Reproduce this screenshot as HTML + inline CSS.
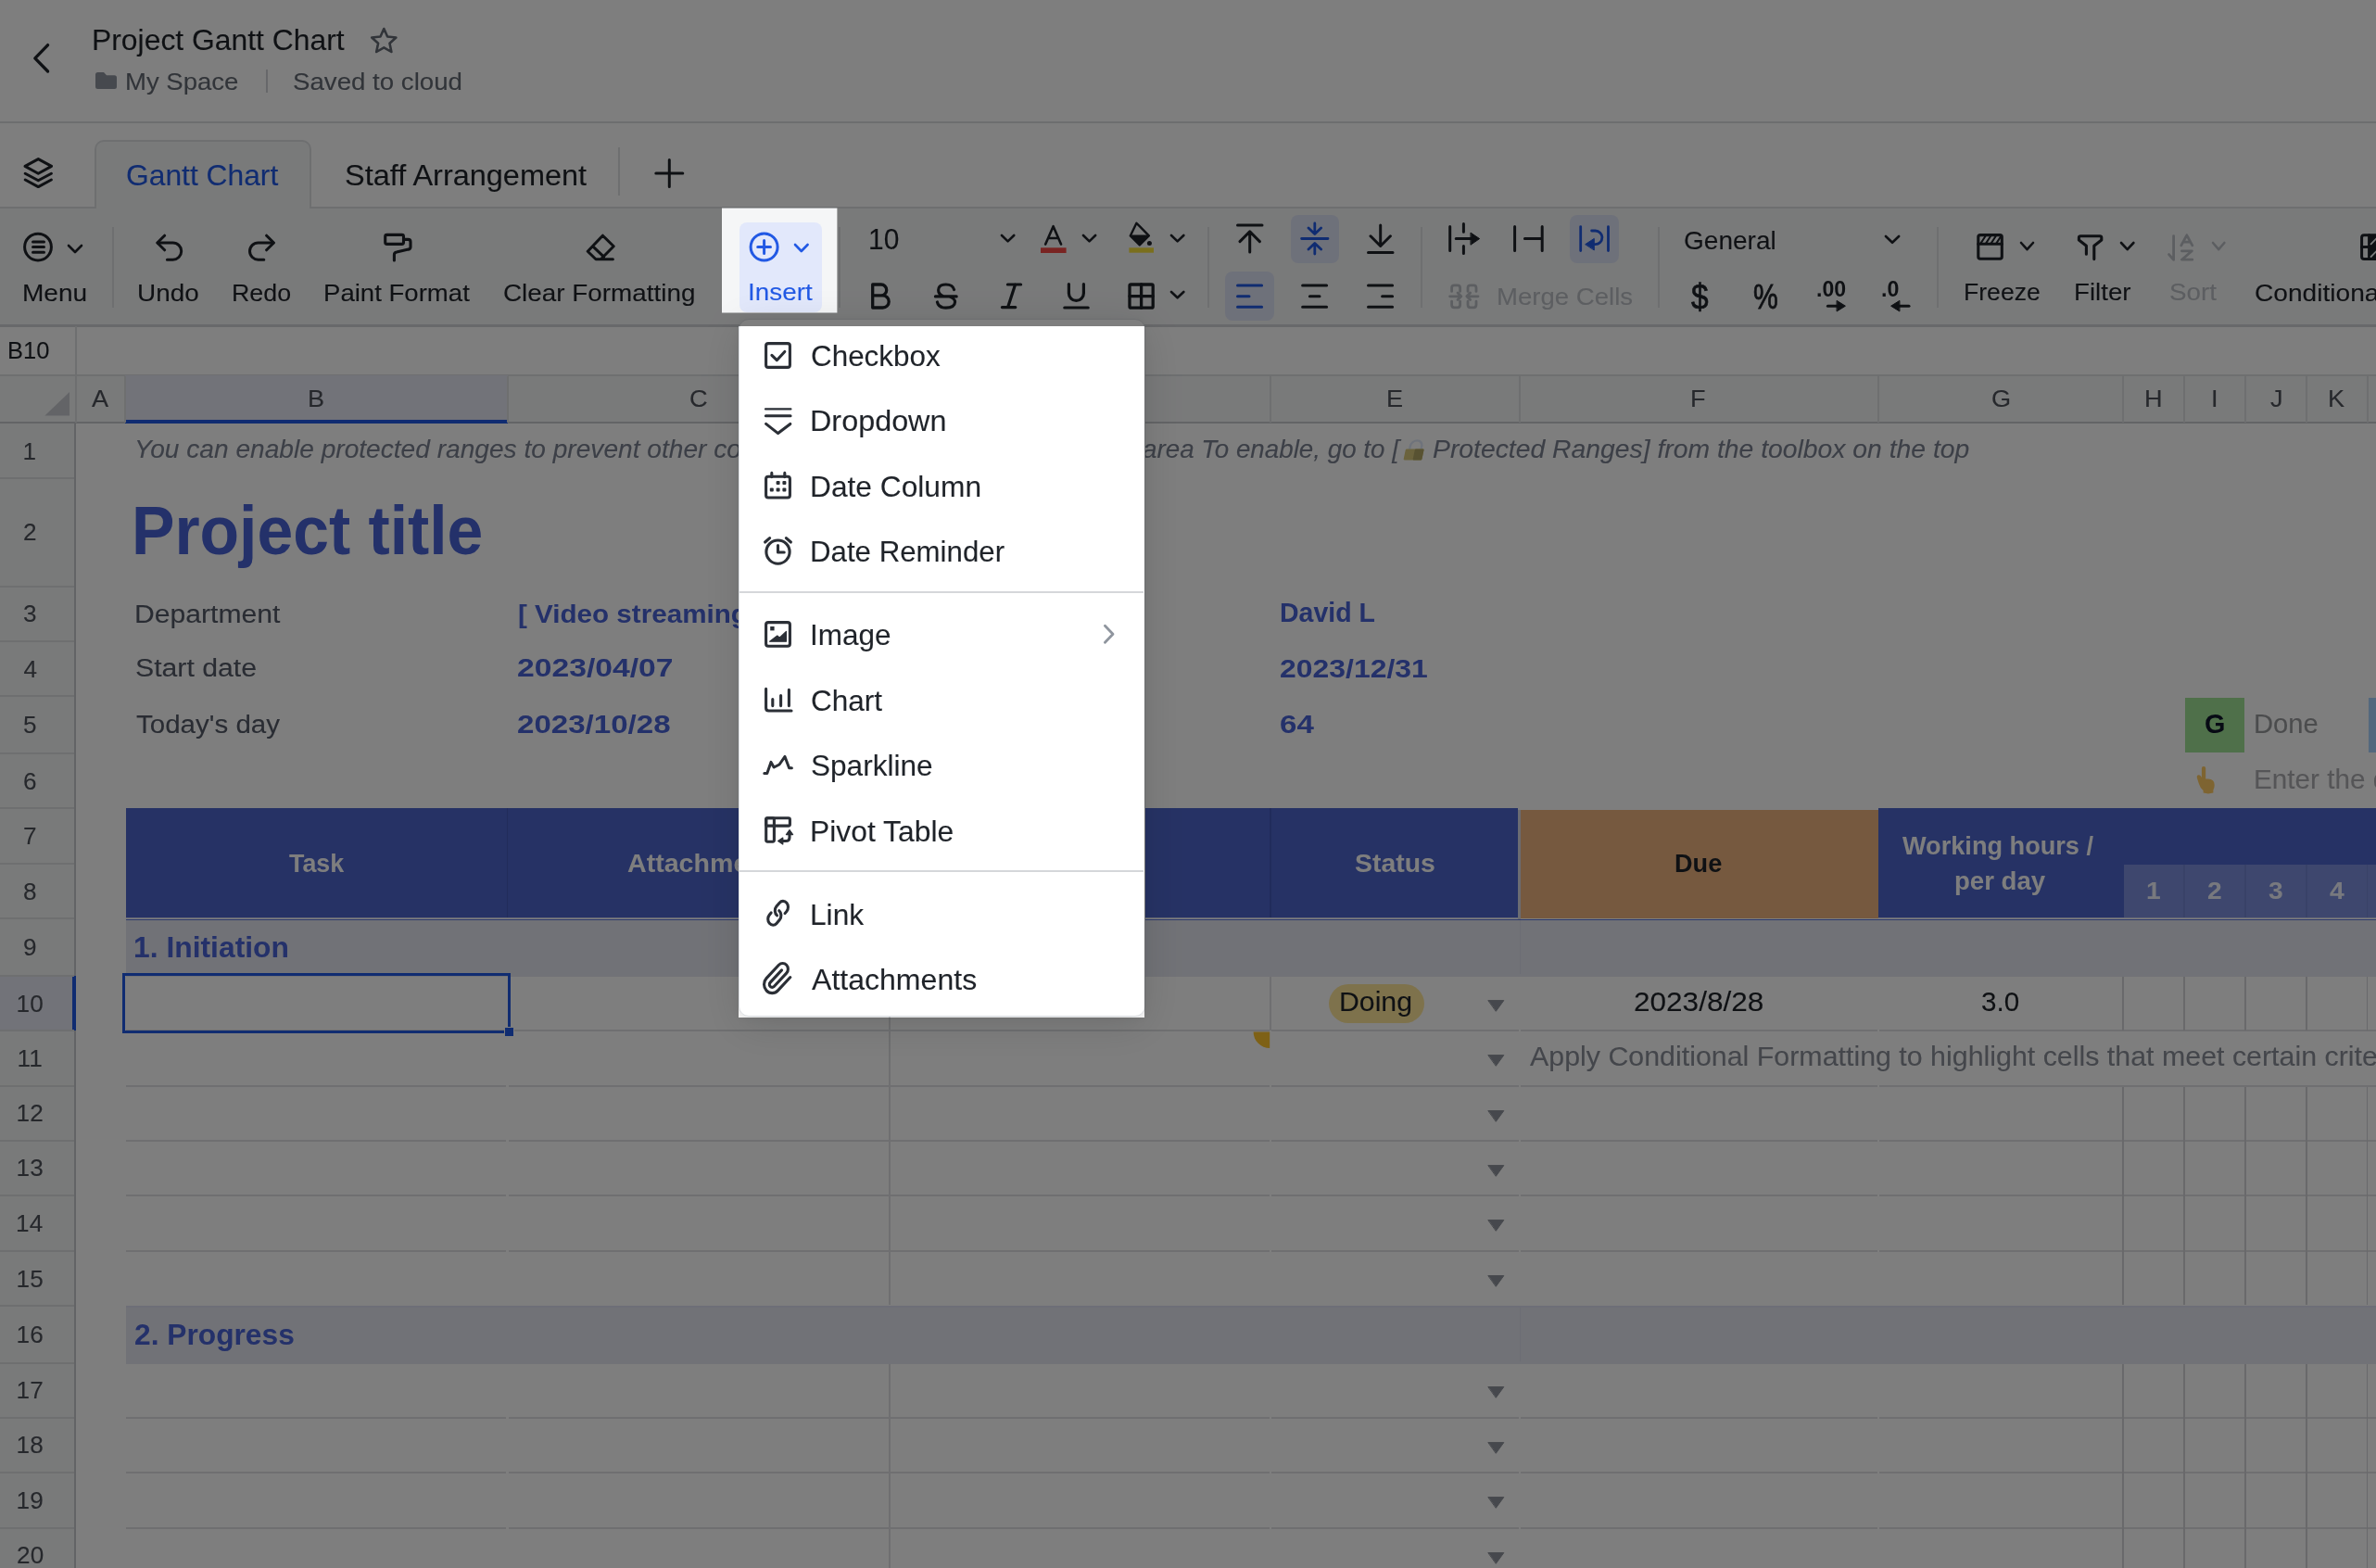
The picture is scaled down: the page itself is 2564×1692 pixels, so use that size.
<!DOCTYPE html>
<html lang="en">
<head>
<meta charset="utf-8">
<title>Project Gantt Chart</title>
<style>
*{margin:0;padding:0}
html,body{width:2564px;height:1692px;overflow:hidden;background:#fff}
body{position:relative;font-family:"Liberation Sans",Arial,sans-serif;color:#1f2329}
#app{position:absolute;left:0;top:0;width:2564px;height:1692px;overflow:hidden;background:#fff;will-change:transform}
#app div,#app span,#app svg,#app li,#app ul,#app header,#app nav{position:absolute}
ul{list-style:none}
.hdr,.tabs,.toolbar,.fbar,.grid,.sheet,.btn,.items,.items li{left:0;top:0;width:2564px;height:1692px}
.t{white-space:nowrap;transform-origin:0 50%;display:block}
.r{-webkit-text-stroke:0.1px currentColor}
.menu{background:#fff;border-radius:11px;box-sizing:border-box;border:1.500px solid #dcdfe3;box-shadow:0 10px 44px rgba(31,35,41,.13),0 2px 10px rgba(31,35,41,.05)}
#app .items li.sep{left:798px;width:436px;height:2px;background:#d5d7da}
#mask{position:absolute;left:0;top:0}
</style>
</head>
<body>
<div id="app">
<header class="hdr">
<div class="strip" style="left:0.0px;top:0.0px;width:2564.0px;height:130.6px;background:#fff;border-bottom:2px solid #dcdee1"></div>
<svg class="ic" style="left:30px;top:40px" width="30" height="46" viewBox="30 40 30 46" fill="none" stroke="#1f2329" stroke-width="3.3" stroke-linecap="round" stroke-linejoin="round"><path d="M51.600 48.600 L37.800 62.800 L51.600 77"/></svg>
<span class="t r" style="left:98.6px;top:29.4px;font-size:30.96px;line-height:30.96px;color:#1f2329;transform:scaleX(1.0293);">Project Gantt Chart</span>
<svg class="ic" style="left:398px;top:27px" width="34" height="34" viewBox="398 27 34 34" fill="none" stroke="#646a73" stroke-width="2.6" stroke-linecap="round" stroke-linejoin="round"><path d="M414.3 31.0 L418.1 39.5 L427.4 40.5 L420.5 46.8 L422.4 56.0 L414.3 51.3 L406.2 56.0 L408.1 46.8 L401.2 40.5 L410.5 39.5 Z"/></svg>
<svg class="ic" style="left:100px;top:75px" width="30" height="25" viewBox="100 75 30 25" fill="#8f959e" stroke="none" stroke-width="0" stroke-linecap="round" stroke-linejoin="round"><path d="M103 80.5 q0-2.5 2.5-2.5 h6.5 l3 3.2 h8.5 q2.5 0 2.5 2.5 v9.8 q0 2.5-2.5 2.5 h-18 q-2.5 0-2.5-2.5 z"/></svg>
<span class="t r" style="left:134.9px;top:74.6px;font-size:26.16px;line-height:26.16px;color:#646a73;transform:scaleX(1.0526);">My Space</span>
<div style="left:287.0px;top:75.0px;width:2.0px;height:25.0px;background:#d0d3d6"></div>
<span class="t r" style="left:315.8px;top:74.6px;font-size:26.16px;line-height:26.16px;color:#646a73;transform:scaleX(1.0573);">Saved to cloud</span>
</header>
<nav class="tabs">
<div class="strip" style="left:0.0px;top:132.6px;width:2564.0px;height:90.4px;background:#fff;border-bottom:2px solid #dee0e3"></div>
<svg class="ic" style="left:22px;top:166px" width="40" height="40" viewBox="22 166 40 40" fill="none" stroke="#1f2329" stroke-width="3" stroke-linecap="round" stroke-linejoin="round"><path d="M41.3 171.6 L55.6 179.4 L41.3 187.2 L27 179.4 Z"/><path d="M27.2 187.2 L41.3 194.8 L55.4 187.2"/><path d="M27.2 194 L41.3 201.6 L55.4 194"/></svg>
<div class="tab on" style="left:102.0px;top:151.0px;width:234.0px;height:75.0px;background:#f5f6f7;border:2px solid #dee0e3;border-bottom:0;border-radius:10px 10px 0 0;box-sizing:border-box"></div>
<span class="t r" style="left:136.0px;top:172.8px;font-size:31.98px;line-height:31.98px;color:#2259e4;transform:scaleX(0.9939);">Gantt Chart</span>
<span class="t r" style="left:372.0px;top:172.8px;font-size:31.98px;line-height:31.98px;color:#1f2329;transform:scaleX(1.0156);">Staff Arrangement</span>
<div style="left:667.0px;top:159.0px;width:2.0px;height:52.0px;background:#dee0e3"></div>
<svg class="ic" style="left:704px;top:169px" width="36" height="36" viewBox="704 169 36 36" fill="none" stroke="#1f2329" stroke-width="3" stroke-linecap="round" stroke-linejoin="round"><path d="M722.3 172.5 V201.5 M707.8 187 H736.8"/></svg>
</nav>
<div class="toolbar">
<div class="strip" style="left:0.0px;top:225.0px;width:2564.0px;height:124.6px;background:#f5f6f7;border-bottom:3px solid #d2d4d8"></div>
<div class="btn">
<svg class="ic" style="left:22px;top:248px" width="38" height="38" viewBox="22 248 38 38" fill="none" stroke="#1f2329" stroke-width="3" stroke-linecap="round" stroke-linejoin="round"><circle cx="41" cy="266.6" r="14.4"/><path d="M35.5 261 H47.5 M35.5 266.6 H47.5 M35.5 272.2 H47.5"/></svg>
<svg class="ic" style="left:70px;top:261px" width="22" height="15" viewBox="70 261 22 15" fill="none" stroke="#1f2329" stroke-width="2.6" stroke-linecap="round" stroke-linejoin="round"><path d="M74 265 L81 272 L88 265"/></svg>
<span class="t r" style="left:23.9px;top:302.8px;font-size:26.16px;line-height:26.16px;color:#1f2329;transform:scaleX(1.0726);">Menu</span>
</div>
<div class="sep" style="left:121.0px;top:245.0px;width:2.0px;height:87.0px;background:#dee0e3"></div>
<div class="btn">
<svg class="ic" style="left:164px;top:249px" width="38" height="38" viewBox="164 249 38 38" fill="none" stroke="#1f2329" stroke-width="3" stroke-linecap="round" stroke-linejoin="round"><path d="M177.6 254.2 L169.8 262 L177.6 269.8"/><path d="M170.2 262 H186.6 a9.1 9.1 0 0 1 0 18.2 H180.4"/></svg>
<span class="t r" style="left:148.4px;top:302.8px;font-size:26.16px;line-height:26.16px;color:#1f2329;transform:scaleX(1.0667);">Undo</span>
</div>
<div class="btn">
<svg class="ic" style="left:264px;top:249px" width="38" height="38" viewBox="264 249 38 38" fill="none" stroke="#1f2329" stroke-width="3" stroke-linecap="round" stroke-linejoin="round"><path d="M287.6 254.2 L295.4 262 L287.6 269.8"/><path d="M295 262 H278.6 a9.1 9.1 0 0 0 0 18.2 H284.8"/></svg>
<span class="t r" style="left:250.4px;top:302.8px;font-size:26.16px;line-height:26.16px;color:#1f2329;transform:scaleX(1.0250);">Redo</span>
</div>
<div class="btn">
<svg class="ic" style="left:410px;top:248px" width="40" height="40" viewBox="410 248 40 40" fill="none" stroke="#1f2329" stroke-width="3.1" stroke-linecap="round" stroke-linejoin="round"><rect x="415.700" y="253.400" width="19.800" height="10" rx="1.800"/><path d="M436 258.400 H440.400 q2.600 0 2.600 2.600 V266.400 q0 2.300-2.300 2.700 L428 272 q-2.600 0.500-2.600 3 V281"/></svg>
<span class="t r" style="left:348.9px;top:302.8px;font-size:26.16px;line-height:26.16px;color:#1f2329;transform:scaleX(1.0541);">Paint Format</span>
</div>
<div class="btn">
<svg class="ic" style="left:629px;top:249px" width="40" height="38" viewBox="629 249 40 38" fill="none" stroke="#1f2329" stroke-width="3" stroke-linecap="round" stroke-linejoin="round"><path d="M650.400 254.200 L662.200 265.800 L648.400 279.800 H643 L634.200 271.200 Z M639.800 265.800 L651.600 277.200 M648.400 279.800 H661.400"/></svg>
<span class="t r" style="left:543.4px;top:302.8px;font-size:26.16px;line-height:26.16px;color:#1f2329;transform:scaleX(1.0648);">Clear Formatting</span>
</div>
<div class="hot" style="left:798.0px;top:240.0px;width:89.0px;height:96.6px;background:#e2e8fb;border-radius:8px"></div>
<svg class="ic" style="left:806px;top:248px" width="38" height="38" viewBox="806 248 38 38" fill="none" stroke="#2259e4" stroke-width="3" stroke-linecap="round" stroke-linejoin="round"><circle cx="824.600" cy="266.500" r="14.500"/><path d="M824.600 259.600 V273.400 M817.700 266.500 H831.500"/></svg>
<svg class="ic" style="left:853.6px;top:260.4px" width="21.6" height="15" viewBox="853.6 260.4 21.6 15" fill="none" stroke="#2259e4" stroke-width="2.6" stroke-linecap="round" stroke-linejoin="round"><path d="M857.6 264.4 L864.4 271.4 L871.2 264.4"/></svg>
<span class="t r" style="left:806.6px;top:302.2px;font-size:26.60px;line-height:26.60px;color:#2259e4;transform:scaleX(1.0477);">Insert</span>
<div class="sep" style="left:904.5px;top:245.0px;width:2.0px;height:87.0px;background:#dee0e3"></div>
<span class="t r" style="left:936.5px;top:243.2px;font-size:31.10px;line-height:31.10px;color:#1f2329;transform:scaleX(0.9625);">10</span>
<svg class="ic" style="left:1076.6px;top:250px" width="21.2" height="14.4" viewBox="1076.6 250 21.2 14.4" fill="none" stroke="#1f2329" stroke-width="2.6" stroke-linecap="round" stroke-linejoin="round"><path d="M1080.6 254 L1087.2 260.4 L1093.8 254"/></svg>
<svg class="ic" style="left:1120px;top:238px" width="34" height="38" viewBox="1120 238 34 38" fill="none" stroke="#1f2329" stroke-width="3" stroke-linecap="round" stroke-linejoin="round"><path d="M1128.2 263.6 L1136.6 244.2 L1145 263.6 M1131 257 H1142.2" stroke-width="2.6"/><rect x="1123" y="267.3" width="27.6" height="5.7" fill="#f54a45" stroke="none"/></svg>
<svg class="ic" style="left:1164.9px;top:250px" width="21.1" height="14.4" viewBox="1164.9 250 21.1 14.4" fill="none" stroke="#1f2329" stroke-width="2.6" stroke-linecap="round" stroke-linejoin="round"><path d="M1168.9 254 L1175.45 260.4 L1182 254"/></svg>
<svg class="ic" style="left:1214px;top:238px" width="36" height="38" viewBox="1214 238 36 38" fill="none" stroke="#1f2329" stroke-width="3" stroke-linecap="round" stroke-linejoin="round"><path d="M1226.4 240.8 L1229.8 244.2 L1239.8 254.4 L1229.8 264.4 L1219.8 254.4 Z" stroke-width="2.4"/><path d="M1220.6 254.4 H1239 L1229.8 263.6 Z" fill="#1f2329" stroke-width="1.6"/><circle cx="1240.4" cy="262.6" r="2.5" fill="#1f2329" stroke="none"/><rect x="1218.4" y="267.3" width="26.6" height="5.4" fill="#f7e03c" stroke="none"/></svg>
<svg class="ic" style="left:1260.4px;top:250px" width="21.3" height="14.4" viewBox="1260.4 250 21.3 14.4" fill="none" stroke="#1f2329" stroke-width="2.6" stroke-linecap="round" stroke-linejoin="round"><path d="M1264.4 254 L1271.05 260.4 L1277.7 254"/></svg>
<svg class="ic" style="left:936px;top:302px" width="30" height="36" viewBox="936 302 30 36" fill="none" stroke="#1f2329" stroke-width="3.3" stroke-linecap="round" stroke-linejoin="round"><path d="M941.7 307 V332 H952.6 a6.6 6.6 0 0 0 0-13.2 H941.7 M941.7 307 H950.8 a5.9 5.9 0 0 1 0 11.8"/></svg>
<svg class="ic" style="left:1004px;top:302px" width="34" height="36" viewBox="1004 302 34 36" fill="none" stroke="#1f2329" stroke-width="3.1" stroke-linecap="round" stroke-linejoin="round"><path d="M1029.6 312.6 q-1.4-5.6-8.8-5.6 q-8 0-8.2 6 q0 4.4 5 6.4 M1009.4 319.9 H1032.2 M1024 319.9 q6.600 2.2 6.6 6 q-0.4 6.200-9.8 6.2 q-8.200 0-9.4-6.2"/></svg>
<svg class="ic" style="left:1076px;top:302px" width="32" height="36" viewBox="1076 302 32 36" fill="none" stroke="#1f2329" stroke-width="3.2" stroke-linecap="round" stroke-linejoin="round"><path d="M1087.4 307 H1101.6 M1081.4 331.6 H1095.8 M1095.6 307 L1087.6 331.6"/></svg>
<svg class="ic" style="left:1144px;top:302px" width="36" height="36" viewBox="1144 302 36 36" fill="none" stroke="#1f2329" stroke-width="3.2" stroke-linecap="round" stroke-linejoin="round"><path d="M1153.4 306.6 V316.4 a8 8 0 0 0 16 0 V306.600 M1148.8 332 H1174.2"/></svg>
<svg class="ic" style="left:1214px;top:302px" width="36" height="36" viewBox="1214 302 36 36" fill="none" stroke="#1f2329" stroke-width="3.3" stroke-linecap="round" stroke-linejoin="round"><rect x="1219" y="307" width="25.2" height="25.2" rx="1.500"/><path d="M1231.6 307 V332.2 M1219 319.6 H1244.2"/></svg>
<svg class="ic" style="left:1260.4px;top:311.3px" width="21.3" height="14.3" viewBox="1260.4 311.3 21.3 14.3" fill="none" stroke="#1f2329" stroke-width="2.6" stroke-linecap="round" stroke-linejoin="round"><path d="M1264.4 315.3 L1271.05 321.6 L1277.7 315.3"/></svg>
<div class="sep" style="left:1302.6px;top:245.0px;width:2.0px;height:87.0px;background:#dee0e3"></div>
<svg class="ic" style="left:1330px;top:238px" width="38" height="40" viewBox="1330 238 38 40" fill="none" stroke="#1f2329" stroke-width="3" stroke-linecap="round" stroke-linejoin="round"><path d="M1335.500 243 H1362 M1348.700 272 V250.500 M1338 260.600 L1348.700 249.900 L1359.400 260.600"/></svg>
<div class="on" style="left:1393.0px;top:232.0px;width:51.5px;height:51.6px;background:#dfe5f7;border-radius:8px"></div>
<svg class="ic" style="left:1400px;top:236px" width="38" height="42" viewBox="1400 236 38 42" fill="none" stroke="#2259e4" stroke-width="2.8" stroke-linecap="round" stroke-linejoin="round"><path d="M1404.600 257.500 H1433 M1418.800 241 V251.500 M1412 246 L1418.800 252.600 L1425.600 246 M1418.800 274 V263.500 M1412 269 L1418.800 262.400 L1425.600 269"/></svg>
<svg class="ic" style="left:1471px;top:238px" width="38" height="40" viewBox="1471 238 38 40" fill="none" stroke="#1f2329" stroke-width="3" stroke-linecap="round" stroke-linejoin="round"><path d="M1476.500 272.400 H1503 M1489.700 243 V265 M1479 254.800 L1489.700 265.500 L1500.400 254.800"/></svg>
<div class="on" style="left:1322.0px;top:293.0px;width:52.6px;height:52.5px;background:#dfe5f7;border-radius:8px"></div>
<svg class="ic" style="left:1330px;top:302px" width="38" height="36" viewBox="1330 302 38 36" fill="none" stroke="#2259e4" stroke-width="3" stroke-linecap="round" stroke-linejoin="round"><path d="M1335.500 308 H1361.600 M1335.500 319.700 H1348 M1335.500 331.200 H1361.600"/></svg>
<svg class="ic" style="left:1400px;top:302px" width="38" height="36" viewBox="1400 302 38 36" fill="none" stroke="#1f2329" stroke-width="3" stroke-linecap="round" stroke-linejoin="round"><path d="M1405.600 308 H1431.600 M1413.400 319.700 H1424 M1405.600 331.200 H1431.600"/></svg>
<svg class="ic" style="left:1471px;top:302px" width="38" height="36" viewBox="1471 302 38 36" fill="none" stroke="#1f2329" stroke-width="3" stroke-linecap="round" stroke-linejoin="round"><path d="M1476.500 308 H1502.600 M1491.600 319.700 H1502.600 M1476.500 331.200 H1502.600"/></svg>
<div class="sep" style="left:1532.7px;top:245.0px;width:2.0px;height:87.0px;background:#dee0e3"></div>
<svg class="ic" style="left:1560px;top:236px" width="42" height="44" viewBox="1560 236 42 44" fill="none" stroke="#1f2329" stroke-width="3" stroke-linecap="round" stroke-linejoin="round"><path d="M1564.700 244.600 V270.600 M1579.400 241.400 V250.200 M1579.400 265.400 V273.600 M1571.200 257.500 H1588"/><path d="M1587.300 251.300 L1596.600 257.600 L1587.300 264 Z" fill="#1f2329" stroke-width="1"/></svg>
<svg class="ic" style="left:1630px;top:238px" width="40" height="40" viewBox="1630 238 40 40" fill="none" stroke="#1f2329" stroke-width="3" stroke-linecap="round" stroke-linejoin="round"><path d="M1634.600 244.600 V270.600 M1664.200 244.600 V270.600 M1645.400 257.500 H1664"/></svg>
<div class="on" style="left:1694.0px;top:232.0px;width:52.6px;height:51.6px;background:#dfe5f7;border-radius:8px"></div>
<svg class="ic" style="left:1700px;top:238px" width="42" height="40" viewBox="1700 238 42 40" fill="none" stroke="#2259e4" stroke-width="2.8" stroke-linecap="round" stroke-linejoin="round"><path d="M1705.700 244.600 V270.600 M1735.500 244.600 V270.600 M1717.600 249 H1721.600 a7.300 7.300 0 0 1 0 14.600 H1719"/><path d="M1711 263.500 L1720.300 257.400 V269.600 Z" fill="#2259e4" stroke-width="1"/></svg>
<svg class="ic" style="left:1561px;top:303px" width="38" height="34" viewBox="1561 303 38 34" fill="none" stroke="#bbbfc4" stroke-width="2.8" stroke-linecap="round" stroke-linejoin="round"><path d="M1566.600 314.400 V310.600 q0-2.800 2.800-2.800 h3.400 q2.800 0 2.800 2.800 V314.400 M1584 314.400 V310.600 q0-2.800 2.800-2.800 h3.400 q2.800 0 2.800 2.800 V314.400 M1566.600 325.200 V329 q0 2.800 2.800 2.800 h3.400 q2.800 0 2.800-2.800 V325.200 M1584 325.200 V329 q0 2.800 2.800 2.800 h3.400 q2.800 0 2.800-2.800 V325.200 M1564.600 319.800 H1576.600 M1573 316 L1576.800 319.800 L1573 323.600 M1595 319.800 H1583 M1586.600 316 L1582.800 319.800 L1586.600 323.600"/></svg>
<span class="t r" style="left:1614.7px;top:307.6px;font-size:25.87px;line-height:25.87px;color:#bbbfc4;transform:scaleX(1.0659);">Merge Cells</span>
<div class="sep" style="left:1789.2px;top:245.0px;width:2.0px;height:87.0px;background:#dee0e3"></div>
<span class="t r" style="left:1817.0px;top:246.6px;font-size:26.89px;line-height:26.89px;color:#1f2329;transform:scaleX(1.0430);">General</span>
<svg class="ic" style="left:2030.5px;top:251.4px" width="22.1" height="14.8" viewBox="2030.5 251.4 22.1 14.8" fill="none" stroke="#1f2329" stroke-width="2.6" stroke-linecap="round" stroke-linejoin="round"><path d="M2034.5 255.4 L2041.55 262.2 L2048.6 255.4"/></svg>
<span class="t r" style="left:1825.3px;top:301.6px;font-size:38.37px;line-height:38.37px;color:#1f2329;transform:scaleX(0.8714);-webkit-text-stroke:0.7px currentColor;">$</span>
<span class="t r" style="left:1892.4px;top:301.5px;font-size:37.79px;line-height:37.79px;color:#1f2329;transform:scaleX(0.7969);-webkit-text-stroke:0.8px currentColor;">%</span>
<span class="t" style="left:1960.0px;top:300.1px;font-size:23.84px;line-height:23.84px;color:#1f2329;font-weight:700;transform:scaleX(0.9688);">.00</span>
<svg class="ic" style="left:1966px;top:320px" width="32" height="20" viewBox="1966 320 32 20" fill="none" stroke="#1f2329" stroke-width="3" stroke-linecap="round" stroke-linejoin="round"><path d="M1972.400 330.200 H1984"/><path d="M1982.400 324.600 L1991.400 330.200 L1982.400 335.800 Z" fill="#1f2329" stroke-width="1"/></svg>
<span class="t" style="left:2030.0px;top:300.1px;font-size:23.84px;line-height:23.84px;color:#1f2329;font-weight:700;transform:scaleX(0.9722);">.0</span>
<svg class="ic" style="left:2036px;top:320px" width="32" height="20" viewBox="2036 320 32 20" fill="none" stroke="#1f2329" stroke-width="3" stroke-linecap="round" stroke-linejoin="round"><path d="M2048 330.200 H2060"/><path d="M2049.600 324.600 L2040.600 330.200 L2049.600 335.800 Z" fill="#1f2329" stroke-width="1"/></svg>
<div class="sep" style="left:2090.4px;top:245.0px;width:2.0px;height:87.0px;background:#dee0e3"></div>
<div class="btn">
<svg class="ic" style="left:2129px;top:248px" width="40" height="38" viewBox="2129 248 40 38" fill="none" stroke="#1f2329" stroke-width="3.1" stroke-linecap="round" stroke-linejoin="round"><rect x="2134.800" y="253.600" width="25.500" height="25.700" rx="2.200"/><path d="M2134.800 263.200 H2160.300"/><path d="M2137.600 262.400 L2142.400 255 M2143.200 262.400 L2148 255 M2148.800 262.400 L2153.600 255 M2154.400 262.400 L2159 255.400" stroke-width="2"/></svg>
<svg class="ic" style="left:2177px;top:258px" width="21" height="15.2" viewBox="2177 258 21 15.2" fill="none" stroke="#1f2329" stroke-width="2.6" stroke-linecap="round" stroke-linejoin="round"><path d="M2181 262 L2187.5 269.2 L2194 262"/></svg>
<span class="t r" style="left:2119.0px;top:302.4px;font-size:26.60px;line-height:26.60px;color:#1f2329;">Freeze</span>
</div>
<div class="btn">
<svg class="ic" style="left:2237px;top:248px" width="38" height="38" viewBox="2237 248 38 38" fill="none" stroke="#1f2329" stroke-width="3.1" stroke-linecap="round" stroke-linejoin="round"><path d="M2243.400 259 V256.600 q0-1.800 1.800-1.800 H2266 q1.800 0 1.800 1.800 V259 L2259.800 265.200 V279.600 M2243.400 259 L2251.400 265.200 V274.200"/></svg>
<svg class="ic" style="left:2284.6px;top:258px" width="21.4" height="15.2" viewBox="2284.6 258 21.4 15.2" fill="none" stroke="#1f2329" stroke-width="2.6" stroke-linecap="round" stroke-linejoin="round"><path d="M2288.6 262 L2295.3 269.2 L2302 262"/></svg>
<span class="t r" style="left:2237.7px;top:302.4px;font-size:26.60px;line-height:26.60px;color:#1f2329;transform:scaleX(1.0421);">Filter</span>
</div>
<div class="btn">
<svg class="ic" style="left:2336px;top:248px" width="36" height="38" viewBox="2336 248 36 38" fill="none" stroke="#bbbfc4" stroke-width="2.8" stroke-linecap="round" stroke-linejoin="round"><path d="M2345.600 254.600 V280.400 L2340.600 274.600"/><path d="M2353.800 264.800 L2359.800 253.800 L2365.800 264.800 M2355.800 261.200 H2363.800 M2354.400 270.800 H2365.400 L2354.400 280.200 H2365.800" stroke-width="2.800"/></svg>
<svg class="ic" style="left:2383.6px;top:258px" width="20.4" height="15.2" viewBox="2383.6 258 20.4 15.2" fill="none" stroke="#bbbfc4" stroke-width="2.6" stroke-linecap="round" stroke-linejoin="round"><path d="M2387.6 262 L2393.8 269.2 L2400 262"/></svg>
<span class="t r" style="left:2340.6px;top:302.4px;font-size:26.60px;line-height:26.60px;color:#bbbfc4;transform:scaleX(1.0458);">Sort</span>
</div>
<div class="btn">
<svg class="ic" style="left:2542px;top:248px" width="40" height="38" viewBox="2542 248 40 38" fill="none" stroke="#1f2329" stroke-width="3" stroke-linecap="round" stroke-linejoin="round"><rect x="2548.600" y="253.700" width="27" height="25.800" rx="2.500"/><path d="M2556.600 253.700 V279.500 M2548.600 266.400 H2575.600"/><rect x="2558" y="255" width="16" height="23" fill="#1f2329" stroke="none"/><path d="M2558.600 263.400 L2566 255.600 M2558.600 277 L2566 269.400" stroke="#f5f6f7" stroke-width="1.800"/></svg>
<span class="t r" style="left:2432.9px;top:302.8px;font-size:26.16px;line-height:26.16px;color:#1f2329;transform:scaleX(1.0750);">Conditional Formatting</span>
</div>
</div>
<div class="fbar">
<div class="strip" style="left:0.0px;top:352.6px;width:2564.0px;height:51.4px;background:#fff"></div>
<span class="t r" style="left:8.2px;top:365.2px;font-size:26.16px;line-height:26.16px;color:#1f2329;transform:scaleX(0.9750);">B10</span>
<div style="left:81.0px;top:352.0px;width:2.0px;height:52.0px;background:#dee0e3"></div>
</div>
<div class="grid">
<div class="colhead" style="left:0.0px;top:404.0px;width:2564.0px;height:53.0px;background:#f5f6f7;border-top:2px solid #dee0e3;border-bottom:2px solid #c9cbcf;box-sizing:border-box"></div>
<div class="colsel" style="left:134.6px;top:405.0px;width:413.8px;height:52.0px;background:#e6e9f4;border-bottom:4px solid #2259e4;box-sizing:border-box"></div>
<svg class="ic" style="left:46px;top:420px" width="32" height="32" viewBox="46 420 32 32" fill="#c9cbd0" stroke="none" stroke-width="0" stroke-linecap="round" stroke-linejoin="round"><path d="M75 423 V448.600 H48.400 Z"/></svg>
<div style="left:81.0px;top:406.0px;width:2.0px;height:50.0px;background:#dee0e3"></div>
<span class="t r" style="left:99.3px;top:418.1px;font-size:25.58px;line-height:25.58px;color:#4d5159;transform:scaleX(1.0600);">A</span>
<div style="left:133.6px;top:406.0px;width:2.0px;height:50.0px;background:#dee0e3"></div>
<span class="t r" style="left:332.0px;top:418.1px;font-size:25.58px;line-height:25.58px;color:#4d5159;transform:scaleX(1.0600);">B</span>
<div style="left:547.4px;top:406.0px;width:2.0px;height:50.0px;background:#dee0e3"></div>
<span class="t r" style="left:744.1px;top:418.1px;font-size:25.58px;line-height:25.58px;color:#4d5159;transform:scaleX(1.0600);">C</span>
<div style="left:959.0px;top:406.0px;width:2.0px;height:50.0px;background:#dee0e3"></div>
<span class="t r" style="left:1154.9px;top:418.1px;font-size:25.58px;line-height:25.58px;color:#4d5159;transform:scaleX(1.0600);">D</span>
<div style="left:1370.0px;top:406.0px;width:2.0px;height:50.0px;background:#dee0e3"></div>
<span class="t r" style="left:1495.8px;top:418.1px;font-size:25.58px;line-height:25.58px;color:#4d5159;transform:scaleX(1.0600);">E</span>
<div style="left:1638.6px;top:406.0px;width:2.0px;height:50.0px;background:#dee0e3"></div>
<span class="t r" style="left:1824.3px;top:418.1px;font-size:25.58px;line-height:25.58px;color:#4d5159;transform:scaleX(1.0600);">F</span>
<div style="left:2026.0px;top:406.0px;width:2.0px;height:50.0px;background:#dee0e3"></div>
<span class="t r" style="left:2148.9px;top:418.1px;font-size:25.58px;line-height:25.58px;color:#4d5159;transform:scaleX(1.0600);">G</span>
<div style="left:2290.0px;top:406.0px;width:2.0px;height:50.0px;background:#dee0e3"></div>
<span class="t r" style="left:2313.9px;top:418.1px;font-size:25.58px;line-height:25.58px;color:#4d5159;transform:scaleX(1.0600);">H</span>
<div style="left:2356.0px;top:406.0px;width:2.0px;height:50.0px;background:#dee0e3"></div>
<span class="t r" style="left:2386.3px;top:418.1px;font-size:25.58px;line-height:25.58px;color:#4d5159;transform:scaleX(1.0600);">I</span>
<div style="left:2422.0px;top:406.0px;width:2.0px;height:50.0px;background:#dee0e3"></div>
<span class="t r" style="left:2450.2px;top:418.1px;font-size:25.58px;line-height:25.58px;color:#4d5159;transform:scaleX(1.0600);">J</span>
<div style="left:2488.0px;top:406.0px;width:2.0px;height:50.0px;background:#dee0e3"></div>
<span class="t r" style="left:2511.7px;top:418.1px;font-size:25.58px;line-height:25.58px;color:#4d5159;transform:scaleX(1.0600);">K</span>
<div style="left:2553.6px;top:406.0px;width:2.0px;height:50.0px;background:#dee0e3"></div>
<div class="rowhead" style="left:0.0px;top:457.0px;width:82.0px;height:1235.0px;background:#f5f6f7;border-right:2px solid #c9cbcf;box-sizing:border-box"></div>
<div class="rowsel" style="left:0.0px;top:1052.5px;width:80.0px;height:59.8px;background:#e6e9f4;border-right:4px solid #2259e4;width:78px"></div>
<div style="left:0.0px;top:515.0px;width:80.0px;height:2.0px;background:#dee0e3"></div>
<span class="t r" style="left:24.6px;top:473.7px;font-size:26.16px;line-height:26.16px;color:#4d5159;">1</span>
<div style="left:0.0px;top:631.5px;width:80.0px;height:2.0px;background:#dee0e3"></div>
<span class="t r" style="left:25.1px;top:561.4px;font-size:26.16px;line-height:26.16px;color:#4d5159;">2</span>
<div style="left:0.0px;top:690.7px;width:80.0px;height:2.0px;background:#dee0e3"></div>
<span class="t r" style="left:25.1px;top:649.3px;font-size:26.16px;line-height:26.16px;color:#4d5159;">3</span>
<div style="left:0.0px;top:750.4px;width:80.0px;height:2.0px;background:#dee0e3"></div>
<span class="t r" style="left:25.6px;top:708.7px;font-size:26.16px;line-height:26.16px;color:#4d5159;">4</span>
<div style="left:0.0px;top:811.5px;width:80.0px;height:2.0px;background:#dee0e3"></div>
<span class="t r" style="left:25.1px;top:769.1px;font-size:26.16px;line-height:26.16px;color:#4d5159;">5</span>
<div style="left:0.0px;top:871.3px;width:80.0px;height:2.0px;background:#dee0e3"></div>
<span class="t r" style="left:25.1px;top:829.6px;font-size:26.16px;line-height:26.16px;color:#4d5159;">6</span>
<div style="left:0.0px;top:930.7px;width:80.0px;height:2.0px;background:#dee0e3"></div>
<span class="t r" style="left:25.1px;top:889.2px;font-size:26.16px;line-height:26.16px;color:#4d5159;">7</span>
<div style="left:0.0px;top:990.4px;width:80.0px;height:2.0px;background:#dee0e3"></div>
<span class="t r" style="left:25.1px;top:948.7px;font-size:26.16px;line-height:26.16px;color:#4d5159;">8</span>
<div style="left:0.0px;top:1051.5px;width:80.0px;height:2.0px;background:#dee0e3"></div>
<span class="t r" style="left:25.1px;top:1009.1px;font-size:26.16px;line-height:26.16px;color:#4d5159;">9</span>
<div style="left:0.0px;top:1111.3px;width:80.0px;height:2.0px;background:#dee0e3"></div>
<span class="t r" style="left:17.6px;top:1069.6px;font-size:26.16px;line-height:26.16px;color:#4d5159;">10</span>
<div style="left:0.0px;top:1170.7px;width:80.0px;height:2.0px;background:#dee0e3"></div>
<span class="t r" style="left:18.6px;top:1129.2px;font-size:26.16px;line-height:26.16px;color:#4d5159;">11</span>
<div style="left:0.0px;top:1229.5px;width:80.0px;height:2.0px;background:#dee0e3"></div>
<span class="t r" style="left:17.6px;top:1188.3px;font-size:26.16px;line-height:26.16px;color:#4d5159;">12</span>
<div style="left:0.0px;top:1289.0px;width:80.0px;height:2.0px;background:#dee0e3"></div>
<span class="t r" style="left:17.6px;top:1247.4px;font-size:26.16px;line-height:26.16px;color:#4d5159;">13</span>
<div style="left:0.0px;top:1348.7px;width:80.0px;height:2.0px;background:#dee0e3"></div>
<span class="t r" style="left:17.1px;top:1307.0px;font-size:26.16px;line-height:26.16px;color:#4d5159;">14</span>
<div style="left:0.0px;top:1408.0px;width:80.0px;height:2.0px;background:#dee0e3"></div>
<span class="t r" style="left:17.6px;top:1366.5px;font-size:26.16px;line-height:26.16px;color:#4d5159;">15</span>
<div style="left:0.0px;top:1469.5px;width:80.0px;height:2.0px;background:#dee0e3"></div>
<span class="t r" style="left:17.6px;top:1426.9px;font-size:26.16px;line-height:26.16px;color:#4d5159;">16</span>
<div style="left:0.0px;top:1528.5px;width:80.0px;height:2.0px;background:#dee0e3"></div>
<span class="t r" style="left:17.6px;top:1487.2px;font-size:26.16px;line-height:26.16px;color:#4d5159;">17</span>
<div style="left:0.0px;top:1588.0px;width:80.0px;height:2.0px;background:#dee0e3"></div>
<span class="t r" style="left:17.6px;top:1546.4px;font-size:26.16px;line-height:26.16px;color:#4d5159;">18</span>
<div style="left:0.0px;top:1647.5px;width:80.0px;height:2.0px;background:#dee0e3"></div>
<span class="t r" style="left:17.6px;top:1605.9px;font-size:26.16px;line-height:26.16px;color:#4d5159;">19</span>
<div style="left:0.0px;top:1707.0px;width:80.0px;height:2.0px;background:#dee0e3"></div>
<span class="t r" style="left:18.1px;top:1665.4px;font-size:26.16px;line-height:26.16px;color:#4d5159;">20</span>
<div class="sheet">
<span class="t r" style="left:144.9px;top:472.2px;font-size:26.89px;line-height:26.89px;color:#7a8190;font-style:italic;transform:scaleX(1.0461);">You can enable protected ranges to prevent other collaborators from editing the</span>
<span class="t r" style="left:1232.5px;top:472.2px;font-size:26.89px;line-height:26.89px;color:#7a8190;font-style:italic;transform:scaleX(1.0336);">area To enable, go to [</span>
<svg class="ic emoji" style="left:1512px;top:472px" width="28" height="27" viewBox="1512 472 28 27" fill="none" stroke="none" stroke-width="0" stroke-linecap="round" stroke-linejoin="round"><title>lock</title><g transform="translate(1526 490) skewX(-12) translate(-1526 -490)"><path d="M1520 485 V481.600 a6.200 6.200 0 0 1 12.400 0 V485" stroke="#e0e9f8" stroke-width="2.400"/><rect x="1515.800" y="484.400" width="19.800" height="12" rx="1.200" fill="#d8c97c" stroke="none"/><rect x="1525.800" y="484.400" width="9.800" height="12" rx="1.200" fill="#b3a766" stroke="none"/></g></svg>
<span class="t r" style="left:1545.9px;top:472.2px;font-size:26.89px;line-height:26.89px;color:#7a8190;font-style:italic;transform:scaleX(1.0537);">Protected Ranges] from the toolbox on the top</span>
<span class="t" style="left:141.9px;top:536.6px;font-size:73.40px;line-height:73.40px;color:#4a63d6;font-weight:700;transform:scaleX(0.9490);">Project title</span>
<span class="t r" style="left:144.6px;top:647.6px;font-size:28.34px;line-height:28.34px;color:#545a67;transform:scaleX(1.0637);">Department</span>
<span class="t r" style="left:145.6px;top:706.3px;font-size:28.34px;line-height:28.34px;color:#545a67;transform:scaleX(1.0669);">Start date</span>
<span class="t r" style="left:146.7px;top:766.9px;font-size:28.34px;line-height:28.34px;color:#545a67;transform:scaleX(1.0423);">Today's day</span>
<span class="t" style="left:559.4px;top:647.5px;font-size:28.49px;line-height:28.49px;color:#4a63d6;font-weight:700;transform:scaleX(1.0393);">[ Video streaming project ]</span>
<span class="t" style="left:557.8px;top:706.2px;font-size:28.49px;line-height:28.49px;color:#4a63d6;font-weight:700;transform:scaleX(1.1823);">2023/04/07</span>
<span class="t" style="left:557.8px;top:766.8px;font-size:28.49px;line-height:28.49px;color:#4a63d6;font-weight:700;transform:scaleX(1.1617);">2023/10/28</span>
<span class="t" style="left:1381.0px;top:647.3px;font-size:29.07px;line-height:29.07px;color:#4a63d6;font-weight:700;transform:scaleX(0.9808);">David L</span>
<span class="t" style="left:1380.9px;top:706.5px;font-size:28.49px;line-height:28.49px;color:#4a63d6;font-weight:700;transform:scaleX(1.1206);">2023/12/31</span>
<span class="t" style="left:1380.8px;top:767.3px;font-size:28.49px;line-height:28.49px;color:#4a63d6;font-weight:700;transform:scaleX(1.1613);">64</span>
<div style="left:2357.8px;top:753.0px;width:64.4px;height:58.7px;background:#a1e396"></div>
<span class="t" style="left:2378.8px;top:766.3px;font-size:29.94px;line-height:29.94px;color:#10162a;font-weight:700;transform:scaleX(0.9619);">G</span>
<span class="t r" style="left:2432.4px;top:767.4px;font-size:28.63px;line-height:28.63px;color:#999a9d;transform:scaleX(1.0197);">Done</span>
<div style="left:2556.0px;top:753.0px;width:10.0px;height:58.7px;background:#a8d2ff"></div>
<svg class="ic emoji" style="left:2368px;top:824px" width="26" height="35" viewBox="2368 824 26 35" fill="none" stroke="none" stroke-width="0" stroke-linecap="round" stroke-linejoin="round"><title>pointing up</title><g fill="#ffcb63" stroke="none"><rect x="2375.900" y="826.900" width="4.300" height="16" rx="2.150"/><path d="M2371.200 836.800 q1.600-1.400 3.600 0.400 l2.200 3.400 h6 q6.600 0.400 6.700 6.400 q0 3.600-1.300 5.400 v3.200 q-5.400 1.600-10.800 0 v-2.600 q-3.400-2.600-4.800-7.400 l-1.900-6 q-0.500-1.800 0.300-2.800 z"/></g></svg>
<span class="t r" style="left:2432.3px;top:826.5px;font-size:28.78px;line-height:28.78px;color:#acacb0;transform:scaleX(1.0316);">Enter the date</span>
<div class="thead" style="left:135.6px;top:872.3px;width:2428.4px;height:117.7px;background:#4e66cc"></div>
<div style="left:135.6px;top:990.0px;width:2428.4px;height:1.4px;background:#c9d0f0"></div>
<div style="left:135.6px;top:991.6px;width:2428.4px;height:1.6px;background:#5b73d8"></div>
<div style="left:547.0px;top:872.3px;width:1.4px;height:117.7px;background:#4459b8"></div>
<div style="left:959.4px;top:872.3px;width:1.4px;height:117.7px;background:#4459b8"></div>
<div style="left:1370.4px;top:872.3px;width:1.4px;height:117.7px;background:#4459b8"></div>
<div style="left:1638.2px;top:872.3px;width:388.8px;height:1.7px;background:#fff"></div>
<div class="due" style="left:1640.7px;top:874.0px;width:386.3px;height:117.0px;background:#efb481"></div>
<div style="left:1638.2px;top:874.0px;width:2.4px;height:118.0px;background:#d8dbe6"></div>
<span class="t" style="left:312.0px;top:917.4px;font-size:28.20px;line-height:28.20px;color:#ffffff;font-weight:700;transform:scaleX(0.9516);">Task</span>
<span class="t" style="left:677.0px;top:917.4px;font-size:28.20px;line-height:28.20px;color:#ffffff;font-weight:700;transform:scaleX(1.0143);">Attachment</span>
<span class="t" style="left:1462.0px;top:917.0px;font-size:28.20px;line-height:28.20px;color:#ffffff;font-weight:700;transform:scaleX(1.0083);">Status</span>
<span class="t" style="left:1807.0px;top:917.0px;font-size:28.20px;line-height:28.20px;color:#1f2329;font-weight:700;transform:scaleX(0.9615);">Due</span>
<span class="t" style="left:2052.8px;top:899.5px;font-size:27.03px;line-height:27.03px;color:#ffffff;font-weight:700;transform:scaleX(1.0044);">Working hours /</span>
<span class="t" style="left:2109.0px;top:937.6px;font-size:27.03px;line-height:27.03px;color:#ffffff;font-weight:700;transform:scaleX(1.0211);">per day</span>
<div class="days" style="left:2291.7px;top:933.0px;width:272.3px;height:57.0px;background:#7d91de"></div>
<span class="t" style="left:2315.9px;top:947.8px;font-size:26.16px;line-height:26.16px;color:#f2f4ff;font-weight:700;transform:scaleX(1.0800);">1</span>
<span class="t" style="left:2382.4px;top:947.8px;font-size:26.16px;line-height:26.16px;color:#f2f4ff;font-weight:700;transform:scaleX(1.0800);">2</span>
<span class="t" style="left:2448.4px;top:947.8px;font-size:26.16px;line-height:26.16px;color:#f2f4ff;font-weight:700;transform:scaleX(1.0800);">3</span>
<span class="t" style="left:2513.9px;top:947.8px;font-size:26.16px;line-height:26.16px;color:#f2f4ff;font-weight:700;transform:scaleX(1.0800);">4</span>
<div style="left:2356.4px;top:933.0px;width:1.4px;height:57.0px;background:#7386d2"></div>
<div style="left:2422.4px;top:933.0px;width:1.4px;height:57.0px;background:#7386d2"></div>
<div style="left:2488.4px;top:933.0px;width:1.4px;height:57.0px;background:#7386d2"></div>
<div style="left:2554.0px;top:933.0px;width:1.4px;height:57.0px;background:#7386d2"></div>
<div class="band" style="left:135.6px;top:993.0px;width:2428.4px;height:60.5px;background:#e5e7f0"></div>
<span class="t" style="left:144.0px;top:1006.9px;font-size:31.54px;line-height:31.54px;color:#4a63d6;font-weight:700;transform:scaleX(1.0092);">1. Initiation</span>
<div style="left:135.6px;top:1409.0px;width:2428.4px;height:2.0px;background:#dcdff0"></div>
<div class="band" style="left:135.6px;top:1411.0px;width:2428.4px;height:60.6px;background:#e5e7f0"></div>
<span class="t" style="left:145.0px;top:1424.9px;font-size:31.54px;line-height:31.54px;color:#4a63d6;font-weight:700;transform:scaleX(1.0059);">2. Progress</span>
<div style="left:1639.6px;top:993.0px;width:1.4px;height:58.0px;background:#dadcea"></div>
<div style="left:1639.6px;top:1411.0px;width:1.4px;height:58.0px;background:#dadcea"></div>
<div style="left:135.6px;top:1111.3px;width:2428.4px;height:2.0px;background:#e0e1e4"></div>
<div style="left:135.6px;top:1170.7px;width:2428.4px;height:2.0px;background:#e0e1e4"></div>
<div style="left:135.6px;top:1229.5px;width:2428.4px;height:2.0px;background:#e0e1e4"></div>
<div style="left:135.6px;top:1289.0px;width:2428.4px;height:2.0px;background:#e0e1e4"></div>
<div style="left:135.6px;top:1348.7px;width:2428.4px;height:2.0px;background:#e0e1e4"></div>
<div style="left:135.6px;top:1528.5px;width:2428.4px;height:2.0px;background:#e0e1e4"></div>
<div style="left:135.6px;top:1588.0px;width:2428.4px;height:2.0px;background:#e0e1e4"></div>
<div style="left:135.6px;top:1647.5px;width:2428.4px;height:2.0px;background:#e0e1e4"></div>
<div style="left:546.4px;top:1110.3px;width:2.4px;height:296.7px;background:#fff"></div>
<div style="left:546.4px;top:1527.5px;width:2.4px;height:166.5px;background:#fff"></div>
<div style="left:1369.8px;top:1110.3px;width:2.4px;height:296.7px;background:#fff"></div>
<div style="left:1369.8px;top:1527.5px;width:2.4px;height:166.5px;background:#fff"></div>
<div style="left:1638.8px;top:1110.3px;width:2.4px;height:296.7px;background:#fff"></div>
<div style="left:1638.8px;top:1527.5px;width:2.4px;height:166.5px;background:#fff"></div>
<div style="left:2025.8px;top:1110.3px;width:2.4px;height:296.7px;background:#fff"></div>
<div style="left:2025.8px;top:1527.5px;width:2.4px;height:166.5px;background:#fff"></div>
<div style="left:959.4px;top:1053.5px;width:1.6px;height:354.5px;background:#e0e1e4"></div>
<div style="left:959.4px;top:1471.5px;width:1.6px;height:221.5px;background:#e0e1e4"></div>
<div style="left:1370.2px;top:1053.5px;width:1.6px;height:58.8px;background:#e0e1e4"></div>
<div style="left:2290.3px;top:1053.5px;width:1.4px;height:58.8px;background:#d4d5d9"></div>
<div style="left:2290.3px;top:1172.7px;width:1.4px;height:235.3px;background:#d4d5d9"></div>
<div style="left:2290.3px;top:1471.5px;width:1.4px;height:221.5px;background:#d4d5d9"></div>
<div style="left:2356.3px;top:1053.5px;width:1.4px;height:58.8px;background:#d4d5d9"></div>
<div style="left:2356.3px;top:1172.7px;width:1.4px;height:235.3px;background:#d4d5d9"></div>
<div style="left:2356.3px;top:1471.5px;width:1.4px;height:221.5px;background:#d4d5d9"></div>
<div style="left:2422.3px;top:1053.5px;width:1.4px;height:58.8px;background:#d4d5d9"></div>
<div style="left:2422.3px;top:1172.7px;width:1.4px;height:235.3px;background:#d4d5d9"></div>
<div style="left:2422.3px;top:1471.5px;width:1.4px;height:221.5px;background:#d4d5d9"></div>
<div style="left:2488.3px;top:1053.5px;width:1.4px;height:58.8px;background:#d4d5d9"></div>
<div style="left:2488.3px;top:1172.7px;width:1.4px;height:235.3px;background:#d4d5d9"></div>
<div style="left:2488.3px;top:1471.5px;width:1.4px;height:221.5px;background:#d4d5d9"></div>
<div style="left:2553.9px;top:1053.5px;width:1.4px;height:58.8px;background:#d4d5d9"></div>
<div style="left:2553.9px;top:1172.7px;width:1.4px;height:235.3px;background:#d4d5d9"></div>
<div style="left:2553.9px;top:1471.5px;width:1.4px;height:221.5px;background:#d4d5d9"></div>
<div class="pill" style="left:1434.0px;top:1062.0px;width:103.0px;height:41.5px;background:#ffe79b;border-radius:21px"></div>
<span class="t r" style="left:1445.4px;top:1067.3px;font-size:29.07px;line-height:29.07px;color:#1f2329;transform:scaleX(1.0397);">Doing</span>
<span class="t r" style="left:1762.7px;top:1067.3px;font-size:29.07px;line-height:29.07px;color:#1f2329;transform:scaleX(1.0852);">2023/8/28</span>
<span class="t r" style="left:2138.0px;top:1067.3px;font-size:29.07px;line-height:29.07px;color:#1f2329;transform:scaleX(1.0179);">3.0</span>
<span class="t r" style="left:1650.7px;top:1126.1px;font-size:28.78px;line-height:28.78px;color:#8a8f99;transform:scaleX(1.0557);">Apply Conditional Formatting to highlight cells that meet certain criteria</span>
<svg class="ic" style="left:1603px;top:1075.8px" width="24" height="18" viewBox="1603 1075.8 24 18" fill="#8f939c" stroke="#8f939c" stroke-width="1" stroke-linecap="round" stroke-linejoin="round"><path d="M1606.200 1079.4 H1622.800 L1614.500 1090.8 Z"/></svg>
<svg class="ic" style="left:1603px;top:1135.4px" width="24" height="18" viewBox="1603 1135.4 24 18" fill="#8f939c" stroke="#8f939c" stroke-width="1" stroke-linecap="round" stroke-linejoin="round"><path d="M1606.200 1139 H1622.800 L1614.500 1150.4 Z"/></svg>
<svg class="ic" style="left:1603px;top:1194.5px" width="24" height="18" viewBox="1603 1194.5 24 18" fill="#8f939c" stroke="#8f939c" stroke-width="1" stroke-linecap="round" stroke-linejoin="round"><path d="M1606.200 1198.1 H1622.800 L1614.500 1209.5 Z"/></svg>
<svg class="ic" style="left:1603px;top:1253.65px" width="24" height="18" viewBox="1603 1253.65 24 18" fill="#8f939c" stroke="#8f939c" stroke-width="1" stroke-linecap="round" stroke-linejoin="round"><path d="M1606.200 1257.25 H1622.800 L1614.500 1268.65 Z"/></svg>
<svg class="ic" style="left:1603px;top:1313.25px" width="24" height="18" viewBox="1603 1313.25 24 18" fill="#8f939c" stroke="#8f939c" stroke-width="1" stroke-linecap="round" stroke-linejoin="round"><path d="M1606.200 1316.85 H1622.800 L1614.500 1328.25 Z"/></svg>
<svg class="ic" style="left:1603px;top:1372.75px" width="24" height="18" viewBox="1603 1372.75 24 18" fill="#8f939c" stroke="#8f939c" stroke-width="1" stroke-linecap="round" stroke-linejoin="round"><path d="M1606.200 1376.35 H1622.800 L1614.500 1387.75 Z"/></svg>
<svg class="ic" style="left:1603px;top:1493.4px" width="24" height="18" viewBox="1603 1493.4 24 18" fill="#8f939c" stroke="#8f939c" stroke-width="1" stroke-linecap="round" stroke-linejoin="round"><path d="M1606.200 1497 H1622.800 L1614.500 1508.4 Z"/></svg>
<svg class="ic" style="left:1603px;top:1552.65px" width="24" height="18" viewBox="1603 1552.65 24 18" fill="#8f939c" stroke="#8f939c" stroke-width="1" stroke-linecap="round" stroke-linejoin="round"><path d="M1606.200 1556.25 H1622.800 L1614.500 1567.65 Z"/></svg>
<svg class="ic" style="left:1603px;top:1612.15px" width="24" height="18" viewBox="1603 1612.15 24 18" fill="#8f939c" stroke="#8f939c" stroke-width="1" stroke-linecap="round" stroke-linejoin="round"><path d="M1606.200 1615.75 H1622.800 L1614.500 1627.15 Z"/></svg>
<svg class="ic" style="left:1603px;top:1671.65px" width="24" height="18" viewBox="1603 1671.65 24 18" fill="#8f939c" stroke="#8f939c" stroke-width="1" stroke-linecap="round" stroke-linejoin="round"><path d="M1606.200 1675.25 H1622.800 L1614.500 1686.65 Z"/></svg>
<svg class="ic" style="left:1350px;top:1112px" width="24" height="22" viewBox="1350 1112 24 22" fill="#ffc42e" stroke="none" stroke-width="0" stroke-linecap="round" stroke-linejoin="round"><path d="M1370.200 1113.400 V1131 A17.600 17.600 0 0 1 1352.600 1113.400 Z"/></svg>
<div class="selection" style="left:132.0px;top:1050.0px;width:419.0px;height:65.0px;border:3.4px solid #2259e4;box-sizing:border-box"></div>
<div style="left:543.7px;top:1108.0px;width:11.0px;height:11.0px;background:#2259e4;border:1.500px solid #fff;box-sizing:border-box"></div>
</div>
</div>
<div class="menu" style="left:796.500px;top:344px;width:439px;height:753px"></div>
<ul class="items">
<li><svg class="ic" style="left:822px;top:366px" width="36" height="36" viewBox="822 366 36 36" fill="none" stroke="#2b2f36" stroke-width="3.1" stroke-linecap="round" stroke-linejoin="round"><rect x="826.600" y="370.600" width="25.800" height="25.800" rx="2.500"/><path d="M832.900 383.300 L838.300 388.700 L846.800 379.500"/></svg><span class="t r" style="left:875.3px;top:367.6px;font-size:32.12px;line-height:32.12px;color:#1f2329;transform:scaleX(0.9782);">Checkbox</span></li>
<li><svg class="ic" style="left:822px;top:437px" width="36" height="36" viewBox="822 437 36 36" fill="none" stroke="#2b2f36" stroke-width="3.1" stroke-linecap="round" stroke-linejoin="round"><path d="M826 441.400 H853.400" stroke-width="2.200"/><path d="M826.400 448.800 H853"/><path d="M826.600 457.400 L839.600 467.600 L852.800 457.400"/></svg><span class="t r" style="left:874.3px;top:438.1px;font-size:32.12px;line-height:32.12px;color:#1f2329;transform:scaleX(1.0077);">Dropdown</span></li>
<li><svg class="ic" style="left:822px;top:506px" width="36" height="36" viewBox="822 506 36 36" fill="none" stroke="#2b2f36" stroke-width="3.1" stroke-linecap="round" stroke-linejoin="round"><rect x="826.600" y="514.200" width="25.800" height="22.800" rx="2.500"/><path d="M832.800 510.400 V514.600 M846.800 510.400 V514.600"/><g fill="#2b2f36" stroke="none"><rect x="837.600" y="519" width="4" height="4" rx="1"/><rect x="844.400" y="519" width="4" height="4" rx="1"/><rect x="830.800" y="526.600" width="4" height="4" rx="1"/><rect x="837.600" y="526.600" width="4" height="4" rx="1"/><rect x="844.400" y="526.600" width="4" height="4" rx="1"/></g></svg><span class="t r" style="left:874.3px;top:508.7px;font-size:32.12px;line-height:32.12px;color:#1f2329;transform:scaleX(0.9875);">Date Column</span></li>
<li><svg class="ic" style="left:821px;top:576px" width="38" height="38" viewBox="821 576 38 38" fill="none" stroke="#2b2f36" stroke-width="3.1" stroke-linecap="round" stroke-linejoin="round"><circle cx="839.500" cy="595.600" r="12.600"/><path d="M839.500 588.600 V596 H846.200"/><path d="M825.600 585 L830.600 580.600 M848.400 580.600 L853.400 585"/></svg><span class="t r" style="left:874.4px;top:579.1px;font-size:32.12px;line-height:32.12px;color:#1f2329;transform:scaleX(0.9729);">Date Reminder</span></li>
<li class="sep" style="top:638px"></li>
<li><svg class="ic" style="left:822px;top:666px" width="36" height="36" viewBox="822 666 36 36" fill="none" stroke="#2b2f36" stroke-width="3.1" stroke-linecap="round" stroke-linejoin="round"><rect x="826.600" y="671.600" width="25.800" height="25.600" rx="2.500"/><rect x="831.200" y="676" width="4.400" height="4.400" fill="#2b2f36" stroke="none"/><path d="M830.600 692.200 L838.800 686 L841.200 688.200 L848.400 681.400 V692.200 Z" fill="#2b2f36" stroke-width="1.200"/></svg><span class="t r" style="left:874.3px;top:669.1px;font-size:32.12px;line-height:32.12px;color:#1f2329;transform:scaleX(0.9802);">Image</span></li>
<svg class="ic" style="left:1186px;top:670px" width="22" height="28" viewBox="1186 670 22 28" fill="none" stroke="#8f959e" stroke-width="2.8" stroke-linecap="round" stroke-linejoin="round"><path d="M1192.400 675.200 L1201 684.200 L1192.400 693.200"/></svg>
<li><svg class="ic" style="left:822px;top:738px" width="38" height="34" viewBox="822 738 38 34" fill="none" stroke="#2b2f36" stroke-width="3.1" stroke-linecap="round" stroke-linejoin="round"><path d="M826.600 743.400 V764 q0 3 3 3 H854"/><path d="M833.800 754.600 V761.600 M842.600 750.600 V761.600 M851.400 744.400 V761.600"/></svg><span class="t r" style="left:875.3px;top:739.6px;font-size:32.12px;line-height:32.12px;color:#1f2329;transform:scaleX(0.9821);">Chart</span></li>
<li><svg class="ic" style="left:820px;top:810px" width="40" height="30" viewBox="820 810 40 30" fill="none" stroke="#2b2f36" stroke-width="3" stroke-linecap="round" stroke-linejoin="round"><path d="M824.800 834.400 H827.800 L832 822.400 L835.200 828 L841 825 L847 816.400 L851.600 828.800 H854.400"/></svg><span class="t r" style="left:875.3px;top:810.1px;font-size:32.12px;line-height:32.12px;color:#1f2329;transform:scaleX(0.9826);">Sparkline</span></li>
<li><svg class="ic" style="left:822px;top:877px" width="38" height="38" viewBox="822 877 38 38" fill="none" stroke="#2b2f36" stroke-width="3.1" stroke-linecap="round" stroke-linejoin="round"><rect x="826.700" y="882.800" width="25.700" height="8.300" rx="1.600"/><rect x="826.700" y="882.800" width="8.700" height="25.400" rx="1.600"/><path d="M852 900.400 V903.400 q0 4.100-4.100 4.100 H844.600"/><path d="M848.400 900.600 L852 895.600 L855.600 900.600 Z M844.800 904 L839.600 907.500 L844.800 911 Z" fill="#2b2f36" stroke-width="1.200"/></svg><span class="t r" style="left:874.3px;top:880.6px;font-size:32.12px;line-height:32.12px;color:#1f2329;transform:scaleX(0.9916);">Pivot Table</span></li>
<li class="sep" style="top:939px"></li>
<li><svg class="ic" style="left:820px;top:964px" width="40" height="44" viewBox="820 964 40 44" fill="none" stroke="#2b2f36" stroke-width="3.1" stroke-linecap="round" stroke-linejoin="round"><g transform="matrix(0 -1.3 -1.095 0 852.74 1000.9)"><path vector-effect="non-scaling-stroke" d="M10 13a5 5 0 0 0 7.540.540l3-3a5 5 0 0 0-7.070-7.070l-1.720 1.710"/><path vector-effect="non-scaling-stroke" d="M14 11a5 5 0 0 0-7.540-.540l-3 3a5 5 0 0 0 7.070 7.070l1.710-1.710"/></g></svg><span class="t r" style="left:874.3px;top:970.6px;font-size:32.12px;line-height:32.12px;color:#1f2329;transform:scaleX(0.9860);">Link</span></li>
<li><svg class="ic" style="left:818px;top:1033px" width="42" height="46" viewBox="818 1033 42 46" fill="none" stroke="#2b2f36" stroke-width="3.1" stroke-linecap="round" stroke-linejoin="round"><g transform="translate(821.6 1037.3) scale(1.456 1.562)"><path vector-effect="non-scaling-stroke" d="M21.440 11.050l-9.190 9.190a6 6 0 0 1-8.490-8.490l9.190-9.190a4 4 0 0 1 5.660 5.660l-9.200 9.190a2 2 0 0 1-2.830-2.830l8.490-8.480"/></g></svg><span class="t r" style="left:876.3px;top:1041.1px;font-size:32.12px;line-height:32.12px;color:#1f2329;transform:scaleX(0.9983);">Attachments</span></li>
</ul>
</div>
<svg id="mask" width="2564" height="1692" viewBox="0 0 2564 1692"><path fill="#000" fill-opacity="0.505" fill-rule="evenodd" d="M0 0H2564V1692H0Z M779 224.500H903.400V337.400H779Z M797 352H1235V1098H797Z"/></svg>
</body>
</html>
